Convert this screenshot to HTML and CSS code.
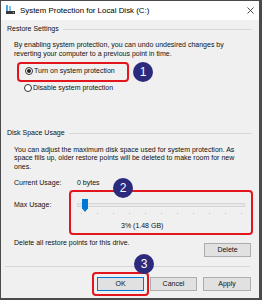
FILE: index.html
```html
<!DOCTYPE html>
<html>
<head>
<meta charset="utf-8">
<link rel="stylesheet" href="styles.css">
</head>
<body>
<div class="win">
  <div class="titlebar">
    <svg class="appicon" width="9" height="10" viewBox="0 0 9 10">
      <rect x="0" y="0" width="2" height="6" fill="#4aa8e8"/>
      <rect x="3" y="1" width="2" height="5" fill="#7cc4f2"/>
      <rect x="0" y="6" width="9" height="3" fill="#3a3a3a"/>
      <rect x="7" y="7" width="1" height="1" fill="#5fd35f"/>
    </svg>
    <span class="title">System Protection for Local Disk (C:)</span>
    <svg class="close" width="7" height="7" viewBox="0 0 7 7">
      <path d="M0.5 0.5 L6.5 6.5 M6.5 0.5 L0.5 6.5" stroke="#333" stroke-width="0.9" fill="none"/>
    </svg>
  </div>
  <div class="content">
    <div class="legend"><span>Restore Settings</span><div class="rule"></div></div>
    <p class="desc d1">By enabling system protection, you can undo undesired changes by<br>reverting your computer to a previous point in time.</p>
    <div class="radio r1"><span class="dot on"></span><span>Turn on system protection</span></div>
    <div class="radio r2"><span class="dot"></span><span>Disable system protection</span></div>

    <div class="legend l2"><span>Disk Space Usage</span><div class="rule"></div></div>
    <p class="desc d2">You can adjust the maximum disk space used for system protection. As<br>space fills up, older restore points will be deleted to make room for new<br>ones.</p>
    <div class="row cur"><span class="lbl">Current Usage:</span><span>0 bytes</span></div>
    <div class="row maxrow">
      <span class="lbl lblmax">Max Usage:</span>
      <div class="slider">
        <div class="track"></div>
        <div class="thumb"></div>
        <div class="ticks">
          <i></i><i></i><i></i><i></i><i></i><i></i><i></i><i></i><i></i><i></i><i></i>
        </div>
      </div>
    </div>
    <div class="pct">3% (1.48 GB)</div>
    <div class="row delrow"><span>Delete all restore points for this drive.</span><button class="btn del">Delete</button></div>
    <div class="sep"></div>
    <div class="buttons">
      <button class="btn ok">OK</button>
      <button class="btn">Cancel</button>
      <button class="btn apply">Apply</button>
    </div>
  </div>

  <div class="hl h1"></div>
  <div class="hl h2"></div>
  <div class="hl h3"></div>
  <div class="badge b1">1</div>
  <div class="badge b2">2</div>
  <div class="badge b3">3</div>
</div>
</body>
</html>
```

FILE: styles.css
```css
body {
  margin: 0;
  background: #ffffff;
}

.win {
  position: relative;
  width: 262px;
  height: 300px;
  box-sizing: border-box;
  border: 1px solid #4a4a4a;
  border-right-width: 3px;
  border-bottom-width: 2px;
  background: #f0f0f0;
  overflow: hidden;
  font-family: "Liberation Sans", Arial, sans-serif;
  font-size: 7px;
  color: #111;
}

.titlebar {
  height: 19px;
  background: #ffffff;
  display: flex;
  align-items: center;
  padding: 0 5px;
}

.appicon {
  display: block;
  margin-top: -1px;
}

.title {
  margin-left: 5px;
  font-size: 7.9px;
  color: #000;
}

.close {
  display: block;
  margin-left: auto;
}

.content {
  display: flex;
  flex-direction: column;
  padding-top: 4px;
}

.legend {
  display: flex;
  align-items: center;
  height: 10px;
  line-height: 10px;
  padding-left: 6px;
  margin-right: 7px;
}

.legend .rule {
  flex: 1;
  height: 1px;
  background: #d8d8d8;
  margin-left: 4px;
}

.l2 {
  margin-top: 35px;
}

.desc {
  margin: 0;
  padding-left: 13px;
  white-space: nowrap;
}

.d1 {
  margin-top: 7px;
  line-height: 8.5px;
}

.d2 {
  margin-top: 8px;
  line-height: 8.3px;
}

.radio {
  display: flex;
  align-items: center;
  height: 10px;
  line-height: 10px;
  padding-left: 24px;
}

.r1 {
  margin-top: 8px;
}

.r2 {
  margin-top: 7px;
  padding-left: 23px;
}

.dot {
  width: 8px;
  height: 8px;
  box-sizing: border-box;
  border: 1px solid #333;
  border-radius: 50%;
  background: #fff;
  margin-right: 1px;
  display: flex;
  align-items: center;
  justify-content: center;
}

.dot.on::after {
  content: "";
  width: 4px;
  height: 4px;
  border-radius: 50%;
  background: #222;
}

.row {
  display: flex;
  padding-left: 13px;
  line-height: 10px;
}

.lbl {
  width: 63px;
  flex: none;
}

.cur {
  margin-top: 7px;
}

.maxrow {
  margin-top: 10px;
  align-items: flex-start;
}

.lblmax {
  line-height: 14px;
}

.slider {
  position: relative;
  width: 168px;
  padding-top: 5px;
}

.track {
  height: 4px;
  box-sizing: border-box;
  border: 1px solid #d6d6d6;
  background: #e7eaea;
}

.thumb {
  position: absolute;
  left: 5px;
  top: 1px;
  width: 6px;
  height: 13px;
  background: #0078d7;
  clip-path: polygon(0 0, 100% 0, 100% 72%, 50% 100%, 0 72%);
}

.ticks {
  display: flex;
  justify-content: space-between;
  margin-top: 6px;
  margin-left: 4px;
  width: 161px;
}

.ticks i {
  display: block;
  width: 1px;
  height: 1px;
  background: #b8b8b8;
}

.pct {
  margin-top: 7px;
  padding-left: 120px;
  line-height: 10px;
}

.delrow {
  margin-top: 7px;
  align-items: flex-start;
}

.btn {
  font-family: "Liberation Sans", Arial, sans-serif;
  font-size: 7px;
  color: #111;
  height: 14px;
  width: 47px;
  padding: 0;
  box-sizing: border-box;
  border: 1px solid #adadad;
  background: #e1e1e1;
  line-height: 12px;
}

.del {
  margin-left: auto;
  margin-top: 5px;
  margin-right: 8px;
}

.sep {
  margin-top: 9px;
  margin-left: 4px;
  margin-right: 9px;
  height: 1px;
  background: #d6d6d6;
}

.buttons {
  display: flex;
  justify-content: flex-end;
  gap: 6px;
  margin-top: 10px;
  margin-right: 8px;
}

.apply {
  width: 48px;
}

.ok {
  border-color: #0078d7;
}

.hl {
  position: absolute;
  box-sizing: border-box;
  border: 2px solid #e3161e;
  border-radius: 4px;
}

.h1 {
  left: 16px;
  top: 61px;
  width: 112px;
  height: 20px;
}

.h2 {
  left: 68px;
  top: 189px;
  width: 184px;
  height: 45px;
}

.h3 {
  left: 91px;
  top: 271px;
  width: 57px;
  height: 24px;
}

.badge {
  position: absolute;
  width: 20px;
  height: 20px;
  border-radius: 50%;
  background: #2c2a7d;
  color: #ffffff;
  font-family: "Liberation Sans", Arial, sans-serif;
  font-size: 12px;
  line-height: 20px;
  text-align: center;
}

.b1 {
  left: 132px;
  top: 61px;
}

.b2 {
  left: 112px;
  top: 177px;
}

.b3 {
  left: 133px;
  top: 253px;
}
```
